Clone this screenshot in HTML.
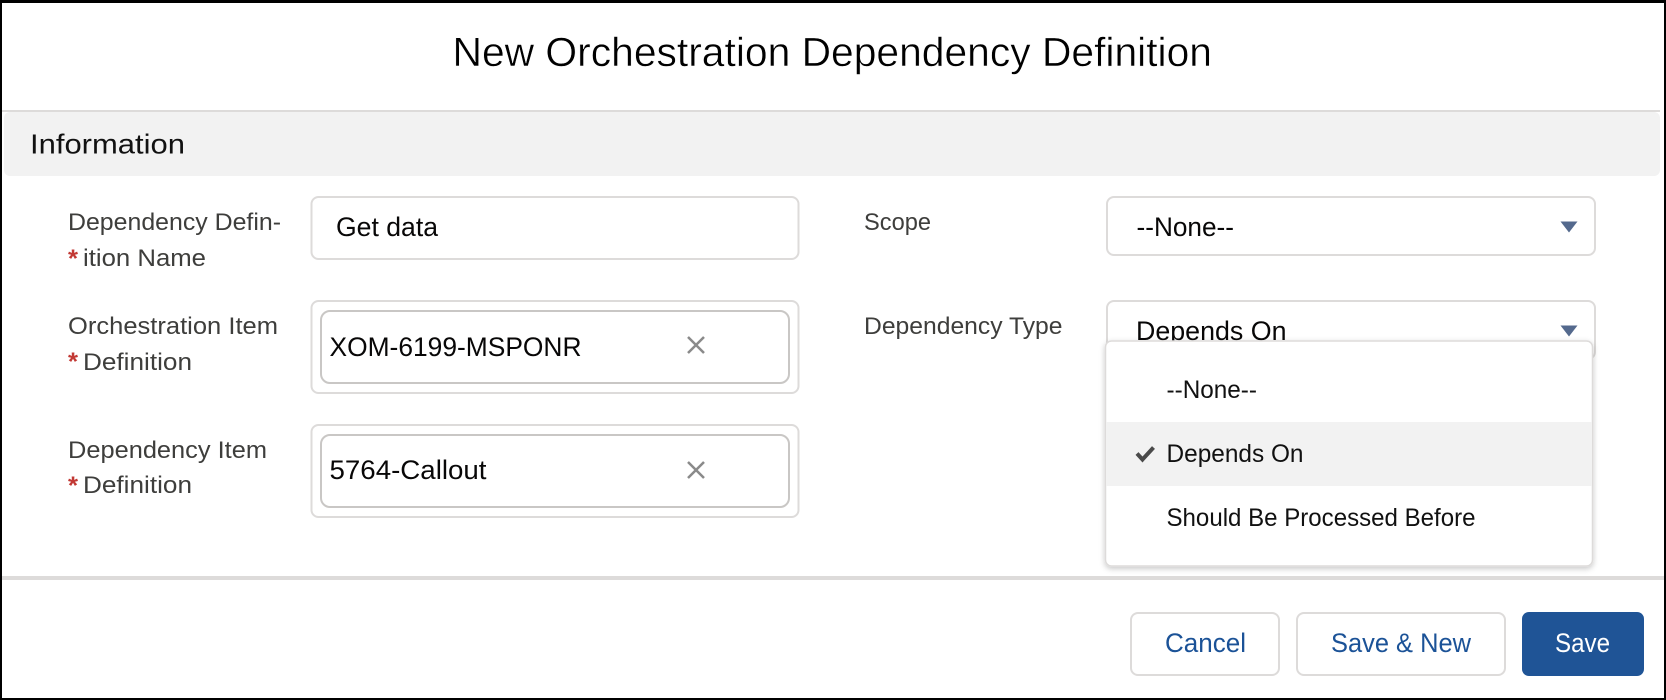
<!DOCTYPE html>
<html lang="en">
<head>
<meta charset="utf-8">
<title>New Orchestration Dependency Definition</title>
<style>
html,body{margin:0;padding:0;background:#fff;width:1666px;height:700px;overflow:hidden}
svg{display:block}
text{font-family:"Liberation Sans",Arial,sans-serif}
.lab{font-size:24.5px;fill:#3e3e3c}
.val{font-size:26.5px;fill:#080707}
.itm{font-size:25px;fill:#111}
.btn{font-size:26.5px;fill:#1b5297}
.box{fill:#fff;stroke:#dddbda;stroke-width:2}
.inner{fill:#fff;stroke:#c9c7c5;stroke-width:2}
.req{font-size:25px;font-weight:bold;fill:#c23934}
</style>
</head>
<body>
<svg xmlns="http://www.w3.org/2000/svg" width="1666" height="700" viewBox="0 0 1666 700">
<defs>
<filter id="sh" x="-5%" y="-5%" width="110%" height="115%">
<feDropShadow dx="0" dy="2" stdDeviation="3" flood-color="#000" flood-opacity="0.22"/>
</filter>
</defs>
<rect width="1666" height="700" fill="#fff"/>

<!-- header -->
<text x="452.5" y="66" font-size="41" fill="#000" stroke="#fff" stroke-width="0.45" textLength="759.5" lengthAdjust="spacingAndGlyphs">New Orchestration Dependency Definition</text>
<rect x="2" y="110" width="1658" height="2" fill="#dddbda"/>
<rect x="4" y="112" width="1656" height="64" rx="6" fill="#f2f2f2"/>
<text x="30" y="153.5" font-size="28" fill="#111" textLength="155" lengthAdjust="spacingAndGlyphs">Information</text>

<!-- left column -->
<text class="lab" x="68" y="230" textLength="213" lengthAdjust="spacingAndGlyphs">Dependency Defin-</text>
<text class="req" x="68" y="267" textLength="10" lengthAdjust="spacingAndGlyphs">*</text>
<text class="lab" x="83" y="266" textLength="123" lengthAdjust="spacingAndGlyphs">ition Name</text>
<rect class="box" x="311.5" y="197" width="487" height="62" rx="7"/>
<text class="val" x="336" y="236" textLength="102" lengthAdjust="spacingAndGlyphs">Get data</text>

<text class="lab" x="68" y="334" textLength="210" lengthAdjust="spacingAndGlyphs">Orchestration Item</text>
<text class="req" x="68" y="370" textLength="10" lengthAdjust="spacingAndGlyphs">*</text>
<text class="lab" x="83" y="370" textLength="109" lengthAdjust="spacingAndGlyphs">Definition</text>
<rect class="box" x="311.5" y="301" width="487" height="92" rx="7"/>
<rect class="inner" x="321" y="311" width="468" height="72" rx="9"/>
<text class="val" x="329.5" y="356" textLength="252" lengthAdjust="spacingAndGlyphs">XOM-6199-MSPONR</text>
<path d="M688 337L704 353M704 337L688 353" stroke="#8a8a8a" stroke-width="2.5" fill="none"/>

<text class="lab" x="68" y="458" textLength="199" lengthAdjust="spacingAndGlyphs">Dependency Item</text>
<text class="req" x="68" y="494" textLength="10" lengthAdjust="spacingAndGlyphs">*</text>
<text class="lab" x="83" y="493" textLength="109" lengthAdjust="spacingAndGlyphs">Definition</text>
<rect class="box" x="311.5" y="425" width="487" height="92" rx="7"/>
<rect class="inner" x="321" y="435" width="468" height="72" rx="9"/>
<text class="val" x="329.5" y="479" textLength="157" lengthAdjust="spacingAndGlyphs">5764-Callout</text>
<path d="M688 462L704 478M704 462L688 478" stroke="#8a8a8a" stroke-width="2.5" fill="none"/>

<!-- right column -->
<text class="lab" x="864" y="230" textLength="67" lengthAdjust="spacingAndGlyphs">Scope</text>
<rect class="box" x="1107" y="197" width="488" height="58" rx="7"/>
<text class="val" x="1136.5" y="236" textLength="97.5" lengthAdjust="spacingAndGlyphs">--None--</text>
<path d="M1560.5 221.5H1577.5L1569 232.5Z" fill="#54698d"/>

<text class="lab" x="864" y="334" textLength="198.5" lengthAdjust="spacingAndGlyphs">Dependency Type</text>
<rect class="box" x="1107" y="301" width="488" height="58" rx="7"/>
<text class="val" x="1136" y="340" textLength="150.5" lengthAdjust="spacingAndGlyphs">Depends On</text>
<path d="M1560.5 325.5H1577.5L1569 336.5Z" fill="#54698d"/>

<!-- dropdown -->
<rect x="1105.5" y="341" width="487" height="225" rx="6" fill="#fff" stroke="#dddbda" stroke-width="1.5" filter="url(#sh)"/>
<rect x="1106" y="422" width="486" height="64" fill="#f2f2f2"/>
<text class="itm" x="1166.5" y="398" textLength="90.5" lengthAdjust="spacingAndGlyphs">--None--</text>
<path d="M1137 453.5L1142.5 459.5L1153.5 447.5" stroke="#4a4a4a" stroke-width="4" fill="none"/>
<text class="itm" x="1166.5" y="462" textLength="137" lengthAdjust="spacingAndGlyphs">Depends On</text>
<text class="itm" x="1166.5" y="526" textLength="309" lengthAdjust="spacingAndGlyphs">Should Be Processed Before</text>

<!-- footer -->
<rect x="2" y="576" width="1662" height="4" fill="#dddbda"/>
<rect class="box" x="1131" y="613" width="148" height="62" rx="7"/>
<text class="btn" x="1165" y="652" textLength="81" lengthAdjust="spacingAndGlyphs">Cancel</text>
<rect class="box" x="1297" y="613" width="208" height="62" rx="7"/>
<text class="btn" x="1331" y="652" textLength="140" lengthAdjust="spacingAndGlyphs">Save &amp; New</text>
<rect x="1522" y="612" width="122" height="64" rx="7" fill="#1f5496"/>
<text class="btn" x="1555" y="652" textLength="55" lengthAdjust="spacingAndGlyphs" style="fill:#fff">Save</text>

<!-- outer frame -->
<rect x="0" y="0" width="1666" height="3" fill="#000"/>
<rect x="0" y="698" width="1666" height="2" fill="#000"/>
<rect x="0" y="0" width="2" height="700" fill="#000"/>
<rect x="1664" y="0" width="2" height="700" fill="#000"/>
</svg>
</body>
</html>
